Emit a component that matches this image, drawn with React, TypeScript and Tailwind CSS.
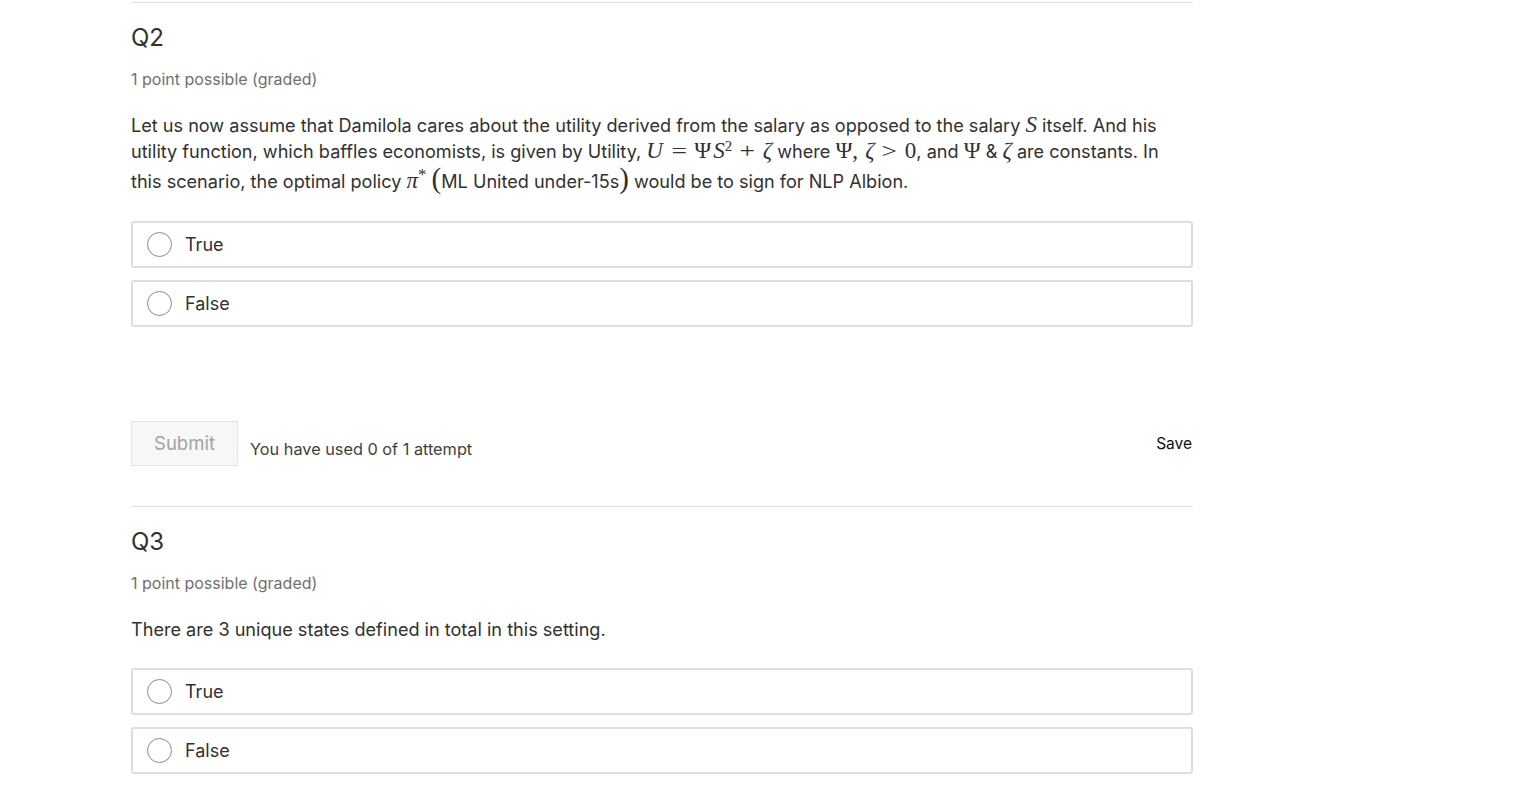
import React from 'react'

const font = { fontFamily: 'Inter, "Noto Sans", sans-serif' }

function M({ children }: { children: React.ReactNode }) {
  return <span className="font-['Liberation_Serif',serif] text-[23px] leading-none">{children}</span>
}

// relation / binary operator with KaTeX-like spacing
function Op({ children }: { children: React.ReactNode }) {
  return <span className="mx-[9px] inline-block scale-x-125 text-[22px]">{children}</span>
}

function Option({ label }: { label: string }) {
  return (
    <label className="flex h-[47px] items-center rounded-[3px] border-2 border-[#dedede] bg-white pl-[14px]">
      <span className="h-[25px] w-[25px] rounded-full border border-[#8a8a8a] bg-white" />
      <span className="ml-[13px] text-[18px] text-[#313131]">{label}</span>
    </label>
  )
}

function Header({ title }: { title: string }) {
  return (
    <>
      <h3 className="text-[24px] leading-[30px] font-normal text-[#313131]">{title}</h3>
      <div className="mt-[16px] text-[16px] leading-[20px] text-[#707070]">1 point possible (graded)</div>
    </>
  )
}

export default function App() {
  return (
    <div className="min-h-screen bg-white" style={font}>
      <div className="ml-[131px] w-[1062px] pt-[2px]">
        {/* Q2 */}
        <section className="border-t border-[#e1e1e1] pt-[20px]">
          <Header title="Q2" />
          <p className="mt-[23px] text-[18.1px] leading-[26px] text-[#313131]">
            Let us now assume that Damilola cares about the utility derived from the salary as opposed to the salary{' '}
            <M>
              <i>S</i>
            </M>{' '}
            itself. And his utility function, which baffles economists, is given by Utility,{' '}
            <M>
              <i className="mr-[1px]">U</i>
              <Op>=</Op>Ψ<i className="ml-[2px]">S</i>
              <sup className="text-[15px]">2</sup>
              <Op>+</Op>
              <i>ζ</i>
            </M>{' '}
            where{' '}
            <M>
              Ψ,<span className="ml-[7px]" />
              <i>ζ</i>
              <Op>&gt;</Op>0
            </M>
            , and <M>Ψ</M> &amp;{' '}
            <M>
              <i>ζ</i>
            </M>{' '}
            are constants. In this scenario, the optimal policy{' '}
            <M>
              <i>π</i>
              <sup className="text-[17px]">*</sup>
            </M>{' '}
            <span className="font-['Liberation_Serif',serif] text-[29px] leading-none">(</span>ML United under-15s
            <span className="font-['Liberation_Serif',serif] text-[29px] leading-none">)</span> would be to sign for NLP
            Albion.
          </p>

          <div className="mt-[27px] flex flex-col gap-[12px]">
            <Option label="True" />
            <Option label="False" />
          </div>

          <div className="mt-[94px] flex items-start">
            <button className="h-[45px] w-[107px] border border-[#e3e3e3] bg-[#f7f7f7] text-[18.5px] text-[#a3a3a3]">
              Submit
            </button>
            <span className="ml-[12px] mt-[18px] text-[16.3px] leading-[20px] text-[#414141]">
              You have used 0 of 1 attempt
            </span>
            <button className="ml-auto mt-[13px] mr-[1px] text-[15.5px] leading-[20px] text-[#111]">Save</button>
          </div>
        </section>

        {/* Q3 */}
        <section className="mt-[40px] border-t border-[#e1e1e1] pt-[20px]">
          <Header title="Q3" />
          <p className="mt-[23px] text-[18.1px] leading-[26px] text-[#313131]">
            There are 3 unique states defined in total in this setting.
          </p>
          <div className="mt-[26px] flex flex-col gap-[12px]">
            <Option label="True" />
            <Option label="False" />
          </div>
        </section>
      </div>
    </div>
  )
}
